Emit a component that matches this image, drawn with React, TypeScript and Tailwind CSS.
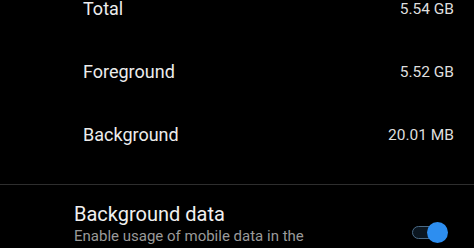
export default function App() {
  const rows = [
    { label: 'Total', value: '5.54 GB' },
    { label: 'Foreground', value: '5.52 GB' },
    { label: 'Background', value: '20.01 MB' },
  ]

  return (
    <div
      className="w-[474px] h-[248px] overflow-hidden bg-black"
      style={{ fontFamily: 'Roboto, "Noto Sans", sans-serif' }}
    >
      {/* usage rows */}
      <div className="mt-[-23px] flex flex-col">
        {rows.map((r) => (
          <div key={r.label} className="h-[63px] flex items-center justify-between pl-[83px] pr-[20px]">
            <span className="text-[18px] leading-[22px] text-[#ececec]">{r.label}</span>
            <span className="text-[15.5px] leading-[20px] text-[#dedede]">{r.value}</span>
          </div>
        ))}
      </div>

      {/* divider */}
      <div className="mt-[18px] h-px bg-[#2e2e2e]" />

      {/* background data */}
      <div className="mt-[17px] flex items-start justify-between pl-[74px] pr-[26px]">
        <div className="flex flex-col">
          <span className="text-[20px] leading-[24px] text-[#f0f0f0]">Background data</span>
          <span className="text-[15px] leading-[20px] text-[#9a9a9a]">Enable usage of mobile data in the</span>
        </div>
        <div className="relative mt-[20px] w-[36px] h-[21px] flex items-center">
          <div className="w-[33px] h-[13px] rounded-full border-[1.5px] border-[#4a6a86] bg-[#0b1620]" />
          <div className="absolute right-0 top-0 w-[21px] h-[21px] rounded-full bg-[#2d8ef0]" />
        </div>
      </div>
    </div>
  )
}
